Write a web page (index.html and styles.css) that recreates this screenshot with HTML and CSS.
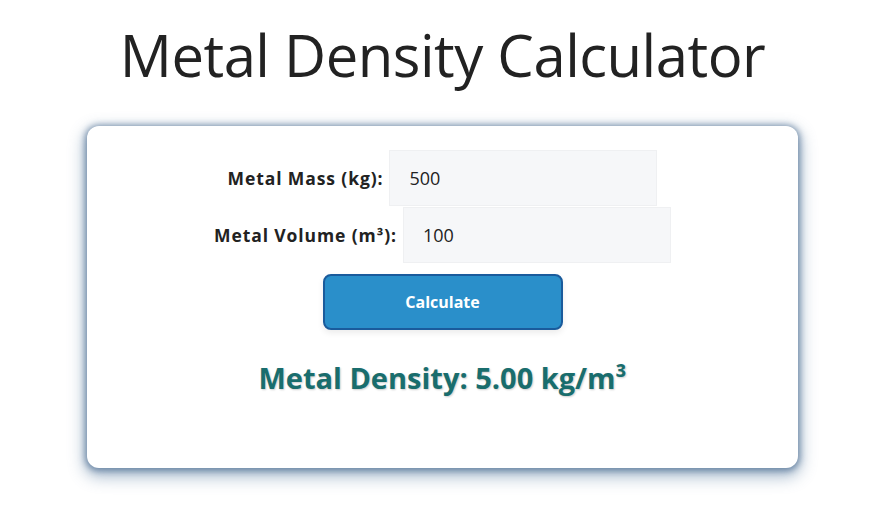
FILE: index.html
```html
<!DOCTYPE html>
<html lang="en">
<head>
<meta charset="utf-8">
<title>Metal Density Calculator</title>
<link rel="stylesheet" href="styles.css">
</head>
<body>
<h1 class="title">Metal Density Calculator</h1>
<div class="card">
  <div class="row">
    <label class="label" for="mass">Metal Mass (kg):</label>
    <input class="field" id="mass" type="text" value="500">
  </div>
  <div class="row">
    <label class="label" for="volume">Metal Volume (m³):</label>
    <input class="field" id="volume" type="text" value="100">
  </div>
  <button class="btn" type="button">Calculate</button>
  <div class="result">Metal Density: 5.00 kg/m³</div>
</div>
</body>
</html>
```
FILE: styles.css
```css
body {
  margin: 0 9px 0 0;
  padding-bottom: 40px;
  background: #ffffff;
  font-family: "Open Sans", "Noto Sans", sans-serif;
  color: #222;
}

.title {
  margin: 17px 0 0;
  text-align: center;
  font-weight: 400;
  font-size: 58px;
  line-height: 76px;
  letter-spacing: -0.5px;
  color: #222;
}

.card {
  width: 711px;
  box-sizing: border-box;
  margin: 33px auto 0;
  height: 342px;
  padding-top: 24px;
  background: #fff;
  border-radius: 12px;
  box-shadow: 0 1px 6px 2px rgba(60, 95, 135, 0.6),
              0 6px 16px 3px rgba(70, 110, 150, 0.45);
  display: flex;
  flex-direction: column;
  align-items: center;
}

.row {
  display: flex;
  align-items: center;
  gap: 6px;
  margin-bottom: 1px;
}

.label {
  font-weight: 700;
  font-size: 17.5px;
  letter-spacing: 0.9px;
  color: #222;
}

.field {
  width: 268px;
  height: 56px;
  box-sizing: border-box;
  padding: 0 19px;
  border: 1px solid #eff0f2;
  background: #f6f7f9;
  font-family: inherit;
  font-size: 18px;
  color: #222;
  outline: none;
}

.btn {
  margin-top: 10px;
  width: 240px;
  height: 56px;
  background: #2a8fca;
  border: 2px solid #1a5b9c;
  border-radius: 8px;
  color: #fff;
  font-family: inherit;
  font-weight: 700;
  font-size: 16px;
  box-shadow: 0 3px 6px rgba(0, 0, 0, 0.08);
}

.result {
  margin-top: 28px;
  font-weight: 700;
  font-size: 29px;
  color: #196d6d;
  text-shadow: 1px 1px 2px rgba(0, 0, 0, 0.2);
}
```
